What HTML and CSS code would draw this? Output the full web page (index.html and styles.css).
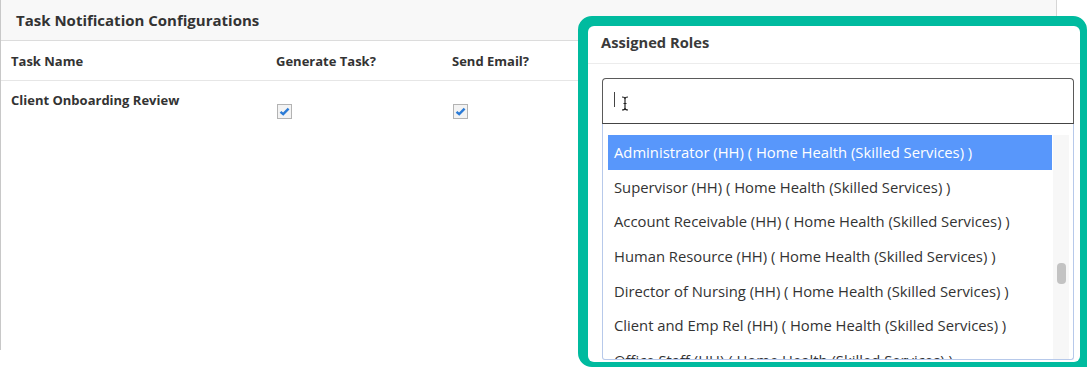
FILE: index.html
```html
<!DOCTYPE html>
<html lang="en">
<head>
    <meta charset="UTF-8">
    <meta name="viewport" content="width=device-width, initial-scale=1.0">
    <title>Task Notification Configurations</title>
    <link rel="stylesheet" href="styles.css">
</head>
<body>
    <div class="panel">
        <div class="panel-heading">
            <h2>Task Notification Configurations</h2>
            <span class="collapse-caret">&#8963;</span>
        </div>
        <div class="task-table">
            <div class="task-row task-head">
                <div>Task Name</div>
                <div>Generate Task?</div>
                <div>Send Email?</div>
            </div>
            <div class="task-row">
                <div>Client Onboarding Review</div>
                <div><span class="check"><svg viewBox="0 0 13 13" width="13" height="13"><path d="M2.5 6.8 L5.2 9.2 L10.6 3.6" fill="none" stroke="#2b7bd6" stroke-width="2.4"/></svg></span></div>
                <div><span class="check"><svg viewBox="0 0 13 13" width="13" height="13"><path d="M2.5 6.8 L5.2 9.2 L10.6 3.6" fill="none" stroke="#2b7bd6" stroke-width="2.4"/></svg></span></div>
            </div>
        </div>
    </div>

    <!-- highlighted roles dialog -->
    <div class="highlight-frame">
        <div class="modal">
            <div class="modal-header">Assigned Roles</div>
            <div class="modal-body">
                <div class="select-search">
                    <span class="caret-line"></span>
                    <svg class="ibeam" width="8" height="15" viewBox="0 0 8 15">
                        <path d="M1 1 Q4 1 4 3 L4 12 Q4 14 1 14 M7 1 Q4 1 4 3 M4 12 Q4 14 7 14 M2.5 7.5 L5.5 7.5" fill="none" stroke="#222" stroke-width="1.2"/>
                    </svg>
                </div>
                <div class="select-results">
                    <ul class="options">
                        <li class="selected">Administrator (HH) ( Home Health (Skilled Services) )</li>
                        <li>Supervisor (HH) ( Home Health (Skilled Services) )</li>
                        <li>Account Receivable (HH) ( Home Health (Skilled Services) )</li>
                        <li>Human Resource (HH) ( Home Health (Skilled Services) )</li>
                        <li>Director of Nursing (HH) ( Home Health (Skilled Services) )</li>
                        <li>Client and Emp Rel (HH) ( Home Health (Skilled Services) )</li>
                        <li>Office Staff (HH) ( Home Health (Skilled Services) )</li>
                    </ul>
                    <div class="scroll-track"><div class="scroll-thumb"></div></div>
                </div>
            </div>
        </div>
    </div>
</body>
</html>
```

FILE: styles.css
```css
body {
    font-family: "Open Sans", "Liberation Sans", sans-serif;
    color: #333;
    background-color: #fff;
    margin: 0;
    width: 1087px;
    height: 368px;
    overflow: hidden;
    position: relative;
}
.panel {
    width: 1055px;
    height: 350px;
    border-left: 1px solid #c8c8c8;
    border-right: 1px solid #d6d6d6;
}
.panel-heading {
    height: 41px;
    background-color: #f8f8f8;
    border-bottom: 1px solid #dcdcdc;
    box-sizing: border-box;
    display: flex;
    align-items: center;
    justify-content: space-between;
    padding: 0 16px 0 15px;
}
.panel-heading h2 {
    margin: 0;
    font-size: 15px;
    font-weight: 700;
    color: #333;
}
.collapse-caret {
    font-size: 13px;
    color: #333;
    margin-top: 6px;
}
.task-row {
    display: grid;
    grid-template-columns: 265px 176px 1fr;
    padding-left: 10px;
    font-size: 13px;
    font-weight: 700;
}
.task-head {
    height: 40px;
    align-items: center;
    border-bottom: 1px solid #e6e6e6;
    box-sizing: border-box;
}
.task-row:not(.task-head) {
    padding-top: 10px;
}
.check {
    display: inline-flex;
    align-items: center;
    justify-content: center;
    width: 15px;
    height: 15px;
    box-sizing: border-box;
    border: 1px solid #b3b3b3;
    background-color: #f3f3f3;
    margin: 13px 0 0 1px;
}

/* teal highlight round the dialog */
.highlight-frame {
    position: absolute;
    left: 578px;
    top: 16px;
    width: 509px;
    height: 351px;
    box-sizing: border-box;
    border-style: solid;
    border-color: #00bb9f;
    border-width: 10px 7px 5px 10px;
    border-radius: 14px 14px 0 14px;
    background-color: #00bb9f;
}
.modal {
    background-color: #fff;
    border-radius: 6px;
    height: 100%;
    overflow: hidden;
}
.modal-header {
    height: 38px;
    box-sizing: border-box;
    border-bottom: 1px solid #ececec;
    padding: 0 0 5px 13px;
    display: flex;
    align-items: center;
    font-size: 14.7px;
    font-weight: 700;
    color: #3a3a3a;
}
.modal-body {
    padding: 14px 6px 0 14px;
}
.select-search {
    height: 46px;
    box-sizing: border-box;
    border: 1px solid #5a5a5a;
    border-bottom-color: #444;
    border-radius: 4px 4px 0 0;
    display: flex;
    align-items: center;
    padding-left: 11px;
    gap: 6px;
}
.caret-line {
    width: 1px;
    height: 15px;
    background-color: #444;
    margin-top: -4px;
}
.ibeam {
    margin-top: 4px;
}
.select-results {
    height: 236px;
    box-sizing: border-box;
    border: 1px solid #b7c9ea;
    border-top: none;
    border-radius: 0 0 3px 3px;
    display: flex;
    padding: 11px 4px 0 5px;
    overflow: hidden;
}
.options {
    list-style: none;
    margin: 0;
    padding: 0;
    flex: 1;
}
.options li {
    height: 34.6px;
    display: flex;
    align-items: center;
    padding-left: 6px;
    font-size: 14.8px;
    color: #333;
    white-space: nowrap;
}
.options li.selected {
    background-color: #5897fb;
    color: #fff;
}
.scroll-track {
    width: 16px;
    margin-left: 1px;
    background-color: #f7f7f7;
    padding-top: 128px;
    box-sizing: border-box;
    display: flex;
    justify-content: center;
}
.scroll-thumb {
    width: 9px;
    height: 21px;
    border-radius: 4px;
    background-color: #c3c3c3;
}
```
